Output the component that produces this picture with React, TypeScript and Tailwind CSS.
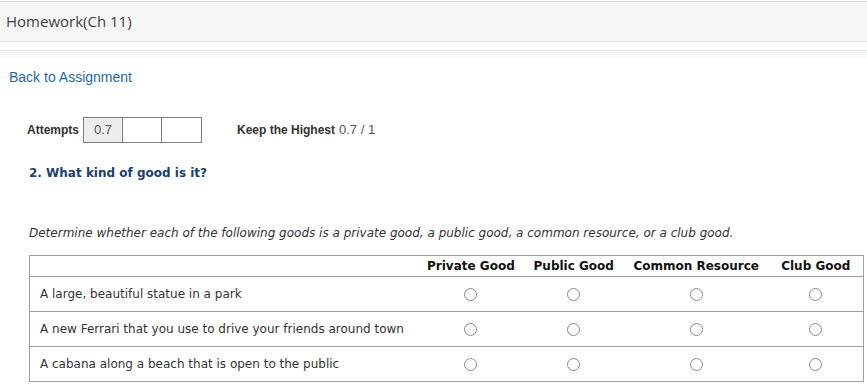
import React from 'react';

const goods = [
  'A large, beautiful statue in a park',
  'A new Ferrari that you use to drive your friends around town',
  'A cabana along a beach that is open to the public',
];

const kinds = [
  { label: 'Private Good', w: 'w-[106px]' },
  { label: 'Public Good', w: 'w-[100px]' },
  { label: 'Common Resource', w: 'w-[145px]' },
  { label: 'Club Good', w: 'w-[95px]' },
];

const verdana = "font-['Verdana','DejaVu_Sans',sans-serif]";
const arial = "font-['Arial','Liberation_Sans',sans-serif]";

const Radio: React.FC = () => (
  <span className="inline-block w-[13px] h-[13px] rounded-full border border-[#8a8a8a] bg-white align-middle" />
);

export default function App() {
  return (
    <div className="w-[867px] h-[386px] bg-white overflow-hidden">
      {/* header */}
      <div className="mt-[1px] h-[41px] bg-[#f6f6f6] border-y border-[#dcdcdc] flex items-center px-[6px]">
        <span className="font-['Open_Sans',sans-serif] text-[15px] text-[#3f3f46] leading-none">Homework(Ch 11)</span>
      </div>
      <div className="mt-[8px] h-[10px] border-t border-[#e2eaea] bg-gradient-to-b from-[#eef3f3] to-white" />

      <div className="pl-[9px] pt-[4px]">
        <a className={`${arial} text-[14px] text-[#1f6aa5] leading-none`}>Back to Assignment</a>
      </div>

      {/* attempts */}
      <div className={`${arial} flex items-center mt-[29px] pl-[27px] h-[26px]`}>
        <span className="text-[12px] font-bold text-[#333] mr-[4px]">Attempts</span>
        <div className="flex border border-[#808080] h-[26px]">
          <div className="w-[39px] bg-[#eeeeee] border-r border-[#808080] flex items-center justify-center text-[13px] text-[#555]">0.7</div>
          <div className="w-[39px] border-r border-[#808080]" />
          <div className="w-[39px]" />
        </div>
        <span className="ml-[35px] text-[12px] font-bold text-[#333]">Keep the Highest</span>
        <span className="ml-[4px] text-[13px] text-[#555]">0.7 / 1</span>
      </div>

      <div className={`${verdana} pl-[29px] mt-[24px] text-[12px] font-bold text-[#1a3f6e] leading-none`}>
        2. What kind of good is it?
      </div>

      <div className={`${verdana} pl-[29px] mt-[48px] text-[12px] italic text-[#333] leading-none`}>
        Determine whether each of the following goods is a private good, a public good, a common resource, or a club good.
      </div>

      <table className={`${verdana} ml-[29px] mt-[16px] w-[835px] border-collapse border border-[#a0a0a0] text-[12px] text-[#222]`}>
        <thead>
          <tr className="h-[21px] border-b border-[#a0a0a0]">
            <th className="w-[389px]" />
            {kinds.map((k) => (
              <th key={k.label} className={`${k.w} text-center font-bold text-[#111] p-0`}>
                {k.label}
              </th>
            ))}
          </tr>
        </thead>
        <tbody>
          {goods.map((g) => (
            <tr key={g} className="h-[35px] border-b border-[#a0a0a0]">
              <td className="pl-[10px] text-[#333]">{g}</td>
              {kinds.map((k) => (
                <td key={k.label} className="text-center">
                  <Radio />
                </td>
              ))}
            </tr>
          ))}
        </tbody>
      </table>
    </div>
  );
}
